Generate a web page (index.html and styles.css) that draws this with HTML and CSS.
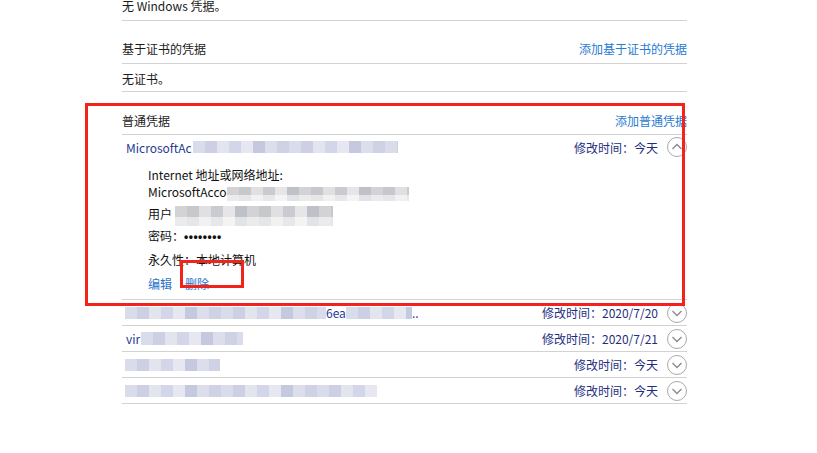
FILE: index.html
```html
<!DOCTYPE html>
<html lang="zh-CN">
<head>
<meta charset="utf-8">
<title>凭据管理器</title>
<link rel="stylesheet" href="styles.css">
</head>
<body>
<div class="page">
  <div class="list">
    <div class="top-row">无 Windows 凭据。</div>

    <div class="head"><span>基于证书的凭据</span><a class="add">添加基于证书的凭据</a></div>
    <div class="empty">无证书。</div>

    <div class="head h3"><span>普通凭据</span><a class="add">添加普通凭据</a></div>

    <div class="cred open">
      <div class="cred-head">
        <span class="name">MicrosoftAc<span class="mosaic lav mz-1"></span></span>
        <span class="meta">修改时间：今天<svg class="chev" viewBox="0 0 20 20"><circle cx="10" cy="10" r="9.5"/><polyline points="5.5,12 10,7.5 14.5,12"/></svg></span>
      </div>
      <div class="detail">
        <div class="field">Internet 地址或网络地址:<br>MicrosoftAcco<span class="mosaic gry mz-2"></span></div>
        <div class="field">用户<span class="mosaic gry mz-3"></span></div>
        <div class="field">密码：<span class="dots">••••••••</span></div>
        <div class="field">永久性：本地计算机</div>
        <div class="actions"><a class="act">编辑</a><a class="act">删除</a></div>
      </div>
    </div>

    <div class="cred">
      <div class="cred-head">
        <span class="name"><span class="mosaic lav mz-4"></span>6ea<span class="mosaic lav mz-5"></span>..</span>
        <span class="meta">修改时间：2020/7/20<svg class="chev" viewBox="0 0 20 20"><circle cx="10" cy="10" r="9.5"/><polyline points="5.5,8 10,12.5 14.5,8"/></svg></span>
      </div>
    </div>
    <div class="cred">
      <div class="cred-head">
        <span class="name">vir<span class="mosaic lav mz-6"></span></span>
        <span class="meta">修改时间：2020/7/21<svg class="chev" viewBox="0 0 20 20"><circle cx="10" cy="10" r="9.5"/><polyline points="5.5,8 10,12.5 14.5,8"/></svg></span>
      </div>
    </div>
    <div class="cred">
      <div class="cred-head">
        <span class="name"><span class="mosaic lav mz-7"></span></span>
        <span class="meta">修改时间：今天<svg class="chev" viewBox="0 0 20 20"><circle cx="10" cy="10" r="9.5"/><polyline points="5.5,8 10,12.5 14.5,8"/></svg></span>
      </div>
    </div>
    <div class="cred">
      <div class="cred-head">
        <span class="name"><span class="mosaic lav mz-8"></span></span>
        <span class="meta">修改时间：今天<svg class="chev" viewBox="0 0 20 20"><circle cx="10" cy="10" r="9.5"/><polyline points="5.5,8 10,12.5 14.5,8"/></svg></span>
      </div>
    </div>
  </div>

  <div class="mark mark-big"></div>
  <div class="mark mark-small"></div>
</div>
</body>
</html>
```

FILE: styles.css
```css
html, body {
  margin: 0;
  padding: 0;
  background: #ffffff;
}
body {
  font-family: "Noto Sans CJK SC", "Noto Sans", sans-serif;
  font-size: 12px;
  color: #1a1a1a;
  overflow: hidden;
}
.page {
  position: relative;
  width: 817px;
  height: 453px;
}
.list {
  margin-left: 122px;
  width: 565px;
}
.top-row {
  line-height: 16px;
  margin-top: -2px;
  padding-bottom: 6px;
  border-bottom: 1px solid #d2d2d2;
}
.head {
  display: flex;
  justify-content: space-between;
  align-items: center;
  line-height: 20px;
  margin-top: 18px;
  padding-bottom: 4px;
  border-bottom: 1px solid #d2d2d2;
}
.head.h3 {
  margin-top: 19px;
  padding-bottom: 3px;
}
.add {
  color: #2a7bd2;
}
.empty {
  line-height: 20px;
  padding: 5px 0 2px;
  border-bottom: 1px solid #d2d2d2;
}
.cred {
  border-bottom: 1px solid #d2d2d2;
}
.cred-head {
  display: flex;
  justify-content: space-between;
  align-items: center;
  height: 25px;
}
.cred.open .cred-head {
  height: 20px;
  padding: 2px 0;
}
.name {
  display: flex;
  align-items: center;
  padding-left: 4px;
  color: #283a95;
  white-space: nowrap;
}
.meta {
  display: flex;
  align-items: center;
  gap: 9px;
  color: #1f2f80;
  white-space: nowrap;
}
.chev {
  width: 20px;
  height: 20px;
  display: block;
}
.chev circle {
  fill: none;
  stroke: #a8a8a8;
  stroke-width: 1;
}
.chev polyline {
  fill: none;
  stroke: #8a8a8a;
  stroke-width: 1.3;
}
.detail {
  padding: 7px 0 7px 26px;
  line-height: 17px;
  color: #111111;
}
.field + .field {
  margin-top: 5px;
}
.dots {
  font-family: "Liberation Sans", sans-serif;
  font-weight: bold;
  font-size: 12px;
  letter-spacing: 0.5px;
}
.actions {
  margin-top: 7px;
  display: flex;
  gap: 13px;
}
.act {
  color: #2a74c8;
}

/* pixelated (redacted) areas */
.mosaic {
  display: inline-block;
  vertical-align: middle;
  filter: blur(0.5px);
}
.lav {
  background: repeating-linear-gradient(90deg,
      #d9dcea 0 12px, #cdd0e4 12px 24px, #e2e4ee 24px 36px,
      #d3d6e8 36px 48px, #e6e7f0 48px 60px, #c5c9df 60px 72px,
      #dcdeec 72px 84px, #cfd2e5 84px 96px);
}
.gry {
  background:
    linear-gradient(180deg, rgba(255,255,255,0) 0 55%, rgba(255,255,255,0.55) 55%),
    repeating-linear-gradient(90deg,
      #d3d3d6 0 12px, #c6c8cc 12px 24px, #e0e0e2 24px 36px,
      #cacbd0 36px 48px, #e6e6e8 48px 60px, #bfc1c8 60px 72px);
}
.mz-1 { width: 205px; height: 12px; margin-left: 1px; }
.mz-2 { width: 182px; height: 14px; margin: -3px 0; }
.mz-3 { width: 158px; height: 20px; margin: -4px 0 -4px 3px; }
.mz-4 { width: 201px; height: 12px; margin-left: -1px; }
.mz-5 { width: 66px; height: 12px; }
.mz-6 { width: 102px; height: 13px; margin-left: 1px; }
.mz-7 { width: 95px; height: 12px; margin-left: -1px; }
.mz-8 { width: 252px; height: 12px; margin-left: -1px; }

/* red annotation boxes */
.mark {
  position: absolute;
  border: 3px solid #f2231b;
  box-sizing: border-box;
}
.mark-big {
  left: 85px;
  top: 105px;
  width: 600px;
  height: 203px;
}
.mark-small {
  left: 180px;
  top: 262px;
  width: 64px;
  height: 28px;
}
```
